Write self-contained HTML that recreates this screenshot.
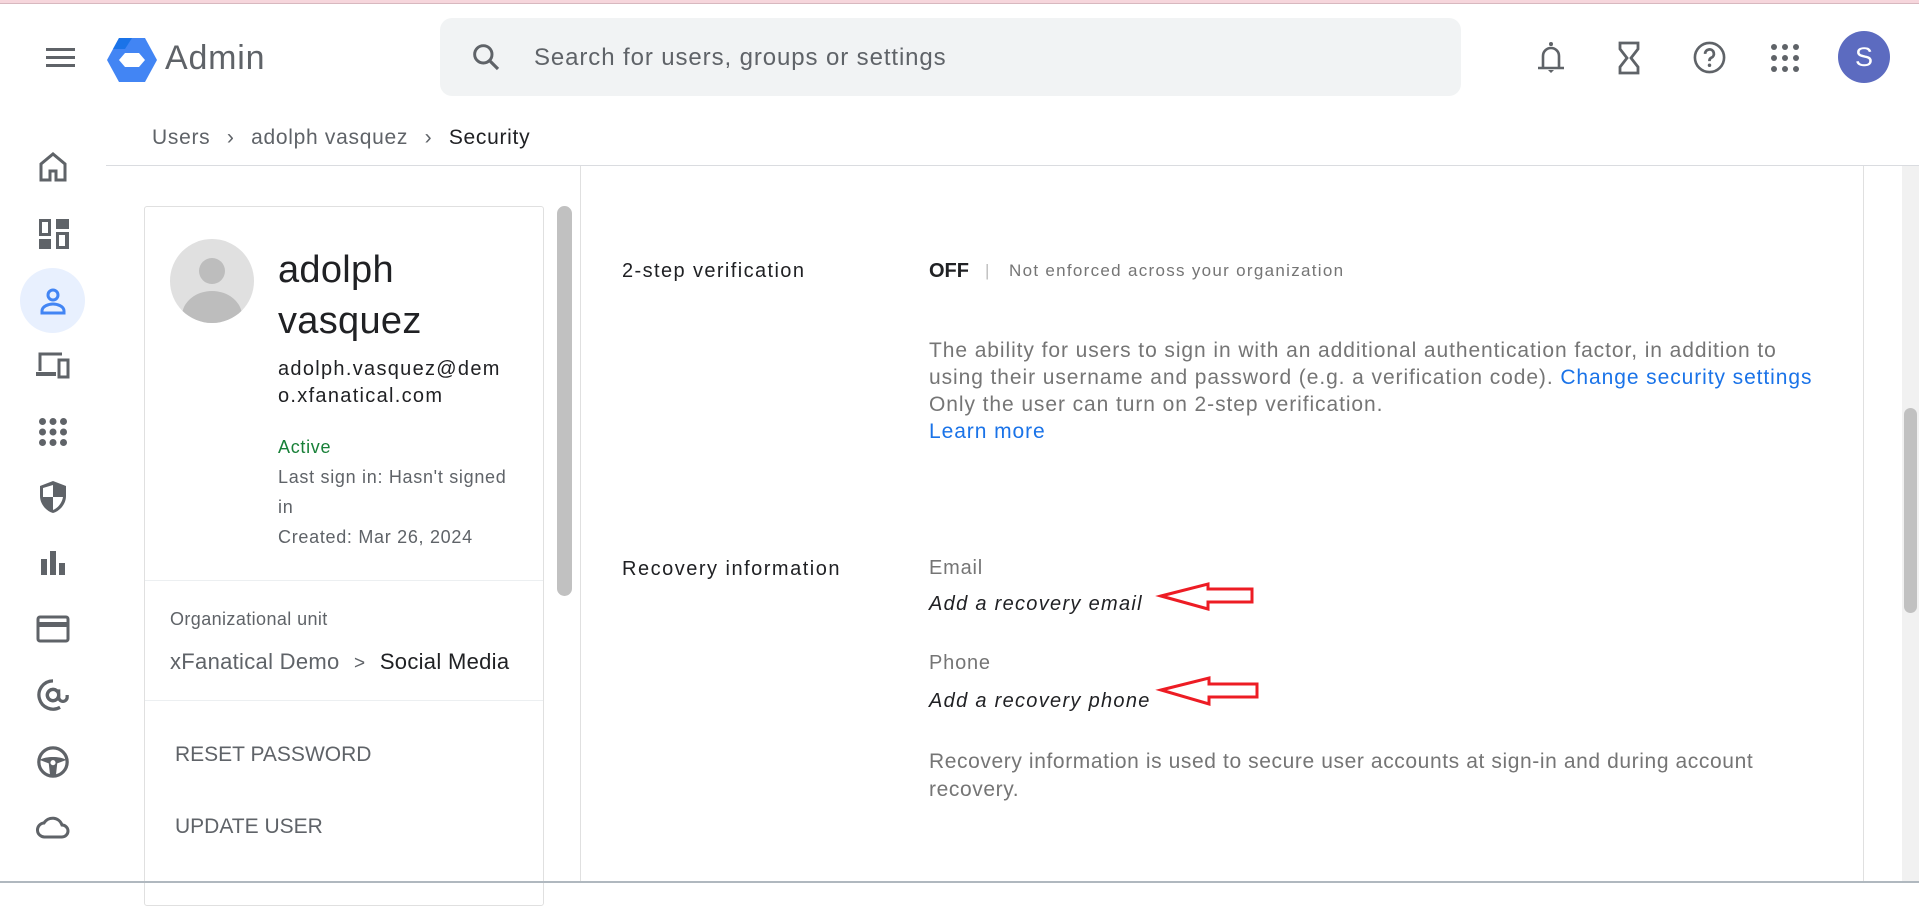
<!DOCTYPE html>
<html><head><meta charset="utf-8"><style>
*{margin:0;padding:0;box-sizing:border-box}
body{width:1919px;height:883px;overflow:hidden;background:#fff;font-family:"Liberation Sans",Arial,sans-serif;position:relative;color:#202124}
.a{position:absolute;white-space:nowrap}
.g{color:#5f6368}
svg{position:absolute}
</style></head><body>
<div class="a" style="left:0;top:0;width:1919px;height:4px;background:#f6d6dc;border-bottom:1px solid #d8b8bf"></div>
<div class="a" style="left:46px;top:48px;width:29px;height:3px;background:#5f6368;box-shadow:0 8px 0 #5f6368,0 16px 0 #5f6368"></div>
<svg style="left:107px;top:38px" width="50" height="44" viewBox="0 0 50 44"><polygon points="12,0 38,0 50,22 38,44 12,44 0,22" fill="#4285f4"/><polygon points="12,0 25,0 18,11 6,11" fill="#1a73e8"/><polygon points="18,15 32,15 38,22 32,29 18,29 12,22" fill="#fff"/></svg>
<div class="a" style="left:165px;top:39px;font-size:34px;color:#5f6368;letter-spacing:0.8px">Admin</div>
<div class="a" style="left:440px;top:18px;width:1021px;height:78px;background:#f1f3f4;border-radius:12px"></div>
<svg style="left:470px;top:41px" width="32" height="32" viewBox="0 0 24 24"><circle cx="10" cy="10" r="6.5" fill="none" stroke="#5f6368" stroke-width="2.2"/><line x1="14.8" y1="14.8" x2="21" y2="21" stroke="#5f6368" stroke-width="2.4"/></svg>
<div class="a g" style="left:534px;top:44px;font-size:24px;color:#5f6368;letter-spacing:0.9px">Search for users, groups or settings</div>
<svg style="left:1536px;top:41px" width="30" height="34" viewBox="0 0 30 34"><path d="M15 3v2M7 27V15a8 8 0 0 1 16 0v12M2 27h26" fill="none" stroke="#5f6368" stroke-width="2.6"/><circle cx="15" cy="3" r="2" fill="#5f6368"/><path d="M12 29h6l-3 3z" fill="#5f6368"/></svg>
<svg style="left:1618px;top:41px" width="22" height="34" viewBox="0 0 22 34"><path d="M2 2h18v6L13 17l7 9v6H2v-6l7-9-7-9z" fill="none" stroke="#5f6368" stroke-width="2.8"/></svg>
<svg style="left:1692px;top:40px" width="35" height="35" viewBox="0 0 24 24"><circle cx="12" cy="12" r="10" fill="none" stroke="#5f6368" stroke-width="1.8"/><path d="M9 9.5a3 3 0 1 1 4.2 2.7c-.8.4-1.2 1-1.2 1.8v.5" fill="none" stroke="#5f6368" stroke-width="1.9"/><circle cx="12" cy="17.3" r="1.2" fill="#5f6368"/></svg>
<svg style="left:1771px;top:44px" width="28" height="28" viewBox="0 0 28 28" fill="#5f6368"><circle cx="3" cy="3" r="3"/><circle cx="14" cy="3" r="3"/><circle cx="25" cy="3" r="3"/><circle cx="3" cy="14" r="3"/><circle cx="14" cy="14" r="3"/><circle cx="25" cy="14" r="3"/><circle cx="3" cy="25" r="3"/><circle cx="14" cy="25" r="3"/><circle cx="25" cy="25" r="3"/></svg>
<div class="a" style="left:1838px;top:31px;width:52px;height:52px;border-radius:50%;background:#5c6bc0;color:#fff;font-size:27px;text-align:center;line-height:52px">S</div>
<div class="a" style="left:152px;top:126px;font-size:21px;color:#5f6368;letter-spacing:0.7px">Users <span style="margin:0 10px">›</span> adolph vasquez <span style="margin:0 10px">›</span> <span style="color:#202124">Security</span></div>
<div class="a" style="left:106px;top:165px;width:1813px;height:1px;background:#dadce0"></div>
<div class="a" style="left:20px;top:268px;width:65px;height:65px;border-radius:50%;background:#e8f0fe"></div>
<svg style="left:39px;top:152px" width="28" height="30" viewBox="0 0 28 30"><path d="M2 28V12L14 2l12 10v16h-9v-9h-6v9z" fill="none" stroke="#5f6368" stroke-width="3"/></svg>
<svg style="left:39px;top:219px" width="30" height="30" viewBox="0 0 30 30" fill="#5f6368"><path d="M0 0h12v17H0zM3 3v11h6V3z"/><rect x="17" y="0" width="13" height="10"/><rect x="0" y="20" width="12" height="10"/><path d="M17 13h13v17H17zM20 16v11h6V16z"/></svg>
<svg style="left:39px;top:286px" width="28" height="30" viewBox="0 0 28 30"><circle cx="14" cy="9" r="5" fill="none" stroke="#4285f4" stroke-width="3"/><path d="M3 25c0-5 7-7 11-7s11 2 11 7v2H3z" fill="none" stroke="#4285f4" stroke-width="3"/></svg>
<svg style="left:36px;top:351px" width="34" height="28" viewBox="0 0 34 28"><path d="M4 20V3h22" fill="none" stroke="#5f6368" stroke-width="3"/><path d="M0 21h20v4H0z" fill="#5f6368"/><rect x="23" y="9" width="9" height="17" fill="none" stroke="#5f6368" stroke-width="3"/></svg>
<svg style="left:39px;top:418px" width="28" height="28" viewBox="0 0 28 28" fill="#5f6368"><circle cx="3.5" cy="3.5" r="3.5"/><circle cx="14" cy="3.5" r="3.5"/><circle cx="24.5" cy="3.5" r="3.5"/><circle cx="3.5" cy="14" r="3.5"/><circle cx="14" cy="14" r="3.5"/><circle cx="24.5" cy="14" r="3.5"/><circle cx="3.5" cy="24.5" r="3.5"/><circle cx="14" cy="24.5" r="3.5"/><circle cx="24.5" cy="24.5" r="3.5"/></svg>
<svg style="left:39px;top:480px" width="28" height="34" viewBox="0 0 28 34"><path d="M14 1L1 6v10c0 8 6 15 13 17 7-2 13-9 13-17V6z" fill="#5f6368"/><path d="M14 5v12H4V8zM14 17h10c-1 6-5 11-10 13z" fill="#fff"/></svg>
<svg style="left:40px;top:551px" width="26" height="24" viewBox="0 0 26 24" fill="#5f6368"><rect x="1" y="8" width="6" height="16"/><rect x="10" y="0" width="6" height="24"/><rect x="19" y="12" width="6" height="12"/></svg>
<svg style="left:36px;top:615px" width="34" height="28" viewBox="0 0 34 28"><rect x="2" y="2" width="30" height="24" rx="2" fill="none" stroke="#5f6368" stroke-width="3"/><rect x="2" y="7" width="30" height="5" fill="#5f6368"/></svg>
<svg style="left:36px;top:678px" width="34" height="34" viewBox="0 0 24 24"><path d="M12 2a10 10 0 1 0 5 18.7M22 12v1.5a3 3 0 0 1-6 0V12a4 4 0 1 1-1.2-2.8M16 8v5" fill="none" stroke="#5f6368" stroke-width="2.3"/><circle cx="12" cy="12" r="4" fill="none" stroke="#5f6368" stroke-width="2.3"/></svg>
<svg style="left:36px;top:745px" width="34" height="34" viewBox="0 0 24 24"><circle cx="12" cy="12" r="10" fill="none" stroke="#5f6368" stroke-width="2.3"/><path d="M2.5 10.5c3-1.5 6-2 9.5-2s6.5.5 9.5 2L15 13l-1 9h-4l-1-9z" fill="#5f6368"/><circle cx="12" cy="12.5" r="1.8" fill="#fff"/></svg>
<svg style="left:36px;top:813px" width="34" height="26" viewBox="0 0 34 26"><path d="M9 24a7 7 0 0 1-1-14 10 10 0 0 1 18 2 6 6 0 0 1 0 12z" fill="none" stroke="#5f6368" stroke-width="3"/></svg>
<div class="a" style="left:144px;top:206px;width:400px;height:700px;border:1px solid #e0e0e0;border-radius:3px"></div>
<div class="a" style="left:170px;top:239px;width:84px;height:84px;border-radius:50%;background:#e0e0e0;overflow:hidden">
 <div class="a" style="left:29px;top:19px;width:26px;height:26px;border-radius:50%;background:#bdbdbd"></div>
 <div class="a" style="left:12px;top:52px;width:60px;height:50px;border-radius:50%;background:#bdbdbd"></div>
</div>
<div class="a" style="left:278px;top:245px;font-size:38px;line-height:51px;letter-spacing:0.3px">adolph<br>vasquez</div>
<div class="a" style="left:278px;top:356px;font-size:20px;line-height:27px;letter-spacing:1.3px">adolph.vasquez@dem<br>o.xfanatical.com</div>
<div class="a" style="left:278px;top:432px;font-size:18px;line-height:30px;color:#5f6368;letter-spacing:0.7px"><span style="color:#188038">Active</span><br>Last sign in: Hasn't signed<br>in<br>Created: Mar 26, 2024</div>
<div class="a" style="left:145px;top:580px;width:398px;height:1px;background:#eceff1"></div>
<div class="a" style="left:170px;top:609px;font-size:18px;color:#5f6368;letter-spacing:0.4px">Organizational unit</div>
<div class="a" style="left:170px;top:649px;font-size:22px;color:#5f6368;letter-spacing:0.3px">xFanatical Demo <span style="margin:0 8px;font-size:19px">&gt;</span> <span style="color:#202124">Social Media</span></div>
<div class="a" style="left:145px;top:700px;width:398px;height:1px;background:#eceff1"></div>
<div class="a" style="left:175px;top:743px;font-size:21px;color:#5f6368">RESET PASSWORD</div>
<div class="a" style="left:175px;top:815px;font-size:21px;color:#5f6368">UPDATE USER</div>
<div class="a" style="left:557px;top:206px;width:15px;height:390px;background:#c1c1c1;border-radius:8px"></div>
<div class="a" style="left:580px;top:166px;width:1px;height:717px;background:#e0e0e0"></div>
<div class="a" style="left:1863px;top:166px;width:1px;height:717px;background:#e0e0e0"></div>
<div class="a" style="left:1902px;top:166px;width:17px;height:717px;background:#f1f1f1"></div>
<div class="a" style="left:1904px;top:408px;width:13px;height:205px;background:#c1c1c1;border-radius:7px"></div>
<div class="a" style="left:622px;top:260px;font-size:20px;letter-spacing:1.4px">2-step verification</div>
<div class="a" style="left:929px;top:260px;font-size:20px;font-weight:bold">OFF</div>
<div class="a" style="left:985px;top:261px;font-size:17px;color:#bdbdbd">|</div>
<div class="a" style="left:1009px;top:261px;font-size:17px;color:#757575;letter-spacing:1.3px">Not enforced across your organization</div>
<div class="a" style="left:929px;top:337px;font-size:21px;line-height:27px;color:#757575;letter-spacing:0.92px">The ability for users to sign in with an additional authentication factor, in addition to<br>using their username and password (e.g. a verification code). <span style="color:#1a73e8">Change security settings</span><br>Only the user can turn on 2-step verification.<br><span style="color:#1a73e8">Learn more</span></div>
<div class="a" style="left:622px;top:558px;font-size:20px;letter-spacing:1.5px">Recovery information</div>
<div class="a" style="left:929px;top:557px;font-size:20px;color:#757575;letter-spacing:0.8px">Email</div>
<div class="a" style="left:929px;top:593px;font-size:20px;font-style:italic;letter-spacing:1.3px">Add a recovery email</div>
<div class="a" style="left:929px;top:652px;font-size:20px;color:#757575;letter-spacing:0.8px">Phone</div>
<div class="a" style="left:929px;top:690px;font-size:20px;font-style:italic;letter-spacing:1.3px">Add a recovery phone</div>
<div class="a" style="left:929px;top:748px;font-size:21px;line-height:28px;color:#757575;letter-spacing:0.6px">Recovery information is used to secure user accounts at sign-in and during account<br>recovery.</div>
<svg style="left:0;top:0" width="1919" height="883"><polygon points="1161,596 1208,584 1208,589 1252,589 1252,602 1208,602 1208,609" fill="none" stroke="#ed1c24" stroke-width="3"/><polygon points="1161,690 1209,678 1209,684 1257,684 1257,697 1209,697 1209,704" fill="none" stroke="#ed1c24" stroke-width="3"/></svg>
<div class="a" style="left:0;top:881px;width:1919px;height:2px;background:#b0b8bf"></div>
</body></html>
